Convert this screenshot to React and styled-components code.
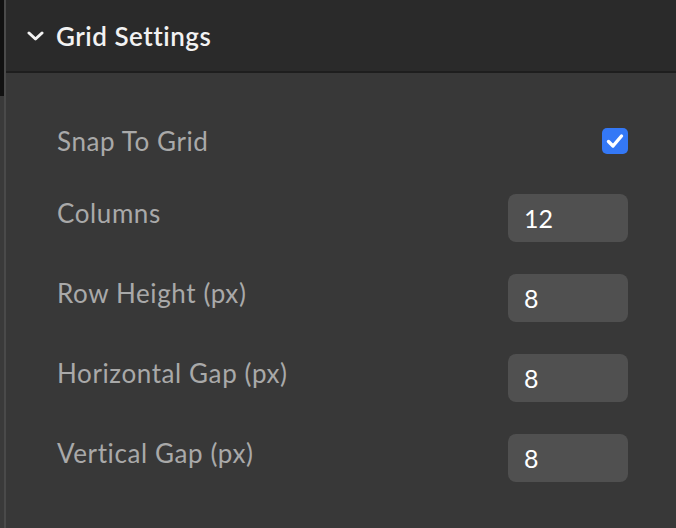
import React, { useState } from 'react';
import styled, { createGlobalStyle } from 'styled-components';

const GlobalStyle = createGlobalStyle`
  html, body {
    margin: 0;
    padding: 0;
    background: #383838;
  }
  body {
    font-family: Lato, "Open Sans", sans-serif;
  }
`;

const Page = styled.div`
  display: flex;
  width: 676px;
  height: 528px;
  overflow: hidden;
`;

const Gutter = styled.div`
  width: 4px;
  display: flex;
  flex-direction: column;
`;

const GutterTop = styled.div`
  height: 96px;
  background: #111111;
`;

const GutterBottom = styled.div`
  flex: 1;
  background: #3a3a3a;
`;

const Divider = styled.div`
  width: 2px;
  background: #4a4a4a;
`;

const Panel = styled.section`
  flex: 1;
  display: flex;
  flex-direction: column;
  background: #383838;
`;

const Header = styled.button`
  box-sizing: border-box;
  display: flex;
  align-items: center;
  gap: 12px;
  height: 73px;
  padding: 0 0 0 21px;
  border: none;
  border-bottom: 2px solid #1e1e1e;
  background: #2a2a2a;
  color: #f2f2f2;
  font-family: inherit;
  font-size: 26px;
  font-weight: 600;
  letter-spacing: 0.5px;
  text-align: left;
  cursor: pointer;
`;

const Body = styled.div`
  display: flex;
  flex-direction: column;
  gap: 32px;
  padding: 47px 48px 0 51px;
`;

const Row = styled.div`
  display: flex;
  align-items: center;
  justify-content: space-between;
  height: ${p => p.$height}px;
`;

const Label = styled.label`
  color: #a9a9a9;
  font-size: 26px;
  letter-spacing: 0.6px;
  padding-bottom: ${p => p.$lift}px;
`;

const Check = styled.span`
  display: flex;
  align-items: center;
  justify-content: center;
  width: 26px;
  height: 26px;
  border-radius: 5px;
  background: ${p => (p.$on ? '#3478f6' : '#505050')};
  cursor: pointer;
`;

const NumberInput = styled.input`
  box-sizing: border-box;
  width: 120px;
  height: 48px;
  padding: 0 0 0 16px;
  border: none;
  border-radius: 8px;
  background: #505050;
  color: #ffffff;
  font-family: inherit;
  font-size: 25px;
  outline: none;
`;

const Chevron = () => (
  <svg width="17" height="10" viewBox="0 0 17 10">
    <path d="M2 2 L8.5 8 L15 2" fill="none" stroke="#f2f2f2" strokeWidth="3" strokeLinecap="round" strokeLinejoin="round" />
  </svg>
);

const fields = [
  { label: 'Columns', value: '12' },
  { label: 'Row Height (px)', value: '8' },
  { label: 'Horizontal Gap (px)', value: '8' },
  { label: 'Vertical Gap (px)', value: '8' },
];

export default function App() {
  const [snap, setSnap] = useState(true);
  const [values, setValues] = useState(fields.map(f => f.value));

  return (
    <Page>
      <GlobalStyle />
      <Gutter>
        <GutterTop />
        <GutterBottom />
      </Gutter>
      <Divider />
      <Panel>
        <Header>
          <Chevron />
          Grid Settings
        </Header>
        <Body>
          <Row $height={42}>
            <Label $lift={0}>Snap To Grid</Label>
            <Check $on={snap} onClick={() => setSnap(!snap)}>
              {snap && (
                <svg width="18" height="16" viewBox="0 0 18 16">
                  <path d="M2.5 8.5 L7 13 L15.5 3" fill="none" stroke="#ffffff" strokeWidth="3.4" strokeLinecap="round" strokeLinejoin="round" />
                </svg>
              )}
            </Check>
          </Row>
          {fields.map((f, i) => (
            <Row key={f.label} $height={48}>
              <Label $lift={10}>{f.label}</Label>
              <NumberInput
                value={values[i]}
                onChange={e => {
                  const next = [...values];
                  next[i] = e.target.value;
                  setValues(next);
                }}
              />
            </Row>
          ))}
        </Body>
      </Panel>
    </Page>
  );
}
